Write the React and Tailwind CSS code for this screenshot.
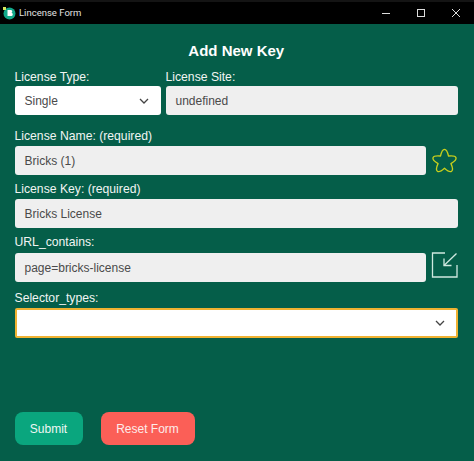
import React from 'react';

const labelClass = 'block text-[12.2px] leading-[16px] text-[#f1f5f3]';
const fieldClass = 'flex h-[29px] w-full items-center rounded-[3px] bg-[#efefef] px-[10px] text-[12px] text-[#4a4a4a]';

const Chevron = () => (
  <svg width="10" height="6" viewBox="0 0 10 6" fill="none" stroke="#444" strokeWidth="1.300">
    <path d="M1 1 5 5l4-4" />
  </svg>
);

const TitleBar = () => (
  <div className="flex h-[24px] items-center border-t-2 border-[#141414] bg-black">
    <svg className="ml-[2px]" width="14" height="14" viewBox="0 0 14 14">
      <circle cx="7.500" cy="7.500" r="6" fill="#12a88a" />
      <rect x="1" y="1" width="3" height="3" fill="#d8e85a" />
      <path d="M5.500 4h3.200a1.500 1.500 0 0 1 .8 2.800 1.600 1.600 0 0 1-.7 3.200H5.500z" fill="#fff" />
    </svg>
    <span className="ml-[3px] font-['Roboto',sans-serif] text-[9.500px] text-[#e2e2e2]">Lincense Form</span>
    <div className="ml-auto flex items-center">
      <svg width="36" height="22" viewBox="0 0 36 22" stroke="#ddd" fill="none">
        <path d="M14 11.500h8" />
      </svg>
      <svg width="34" height="22" viewBox="0 0 34 22" stroke="#ddd" fill="none">
        <rect x="13.500" y="7.500" width="7" height="7" />
      </svg>
      <svg width="36" height="22" viewBox="0 0 36 22" stroke="#ddd" fill="none">
        <path d="M14 7 22 15M22 7l-8 8" />
      </svg>
    </div>
  </div>
);

const Star = () => (
  <svg width="28" height="28" viewBox="0 0 28 28" fill="none" stroke="#c9cf1c" strokeWidth="1.400" strokeLinejoin="round">
    <path d="M9.900 8.800C11.800-.3 16.200-.3 18.100 8.800 27.400 7.840 28.750 12 20.700 16.700 24.500 25.200 20.900 27.800 14 21.500 7.100 27.800 3.500 25.200 7.300 16.700-.75 12 .6 7.840 9.900 8.800z" />
  </svg>
);

const ImportIcon = () => (
  <svg width="27" height="26" viewBox="0 0 27 26" fill="none" stroke="#cfe9e0" strokeWidth="1.300">
    <path d="M14 1H1.500v24H26V13" />
    <path d="M25.500 1.500 13 13.500" />
    <path d="M13 6.500v7h7.500" />
  </svg>
);

export default function App() {
  return (
    <div className="flex h-[461px] w-[474px] flex-col bg-[#055e49] font-['Liberation_Sans',Arial,sans-serif]">
      <TitleBar />
      <div className="flex flex-1 flex-col pl-[14.500px] pr-[16px]">
        <h1 className="mt-[18px] text-center text-[15px] font-bold leading-[18px] text-white">Add New Key</h1>

        <div className="mt-[9px] flex gap-[5px]">
          <div className="w-[146px]">
            <label className={labelClass}>License Type:</label>
            <div className="mt-[1px] flex h-[29px] items-center justify-between rounded-[3px] bg-white pl-[10px] pr-[12px] text-[12px] text-[#4a4a4a]">
              <span>Single</span>
              <Chevron />
            </div>
          </div>
          <div className="flex-1">
            <label className={labelClass}>License Site:</label>
            <div className={`mt-[1px] ${fieldClass}`}>undefined</div>
          </div>
        </div>

        <label className={`mt-[13px] ${labelClass}`}>License Name: (required)</label>
        <div className="mt-[2px] flex items-center">
          <div className={`${fieldClass} flex-1`}>Bricks (1)</div>
          <div className="ml-[5px] flex w-[27px] justify-center">
            <Star />
          </div>
        </div>

        <label className={`mt-[6px] ${labelClass}`}>License Key: (required)</label>
        <div className={`mt-[2px] ${fieldClass}`}>Bricks License</div>

        <label className={`mt-[6px] ${labelClass}`}>URL_contains:</label>
        <div className="mt-[3px] flex items-start">
          <div className={`${fieldClass} flex-1`}>page=bricks-license</div>
          <div className="-mt-[1px] ml-[5px] flex w-[27px] justify-center">
            <ImportIcon />
          </div>
        </div>

        <label className={`mt-[8px] ${labelClass}`}>Selector_types:</label>
        <div className="mt-[2px] flex h-[30px] items-center justify-end rounded-[2px] border-2 border-[#f0b232] bg-white pr-[11px]">
          <Chevron />
        </div>

        <div className="mt-[74px] flex gap-[18px]">
          <button className="h-[33px] w-[68px] rounded-[8px] bg-[#0aa67e] text-[12px] text-[#eef7f3]">Submit</button>
          <button className="h-[33px] w-[94px] rounded-[8px] bg-[#fb5f57] text-[12px] text-[#fdecea]">Reset Form</button>
        </div>
      </div>
    </div>
  );
}
